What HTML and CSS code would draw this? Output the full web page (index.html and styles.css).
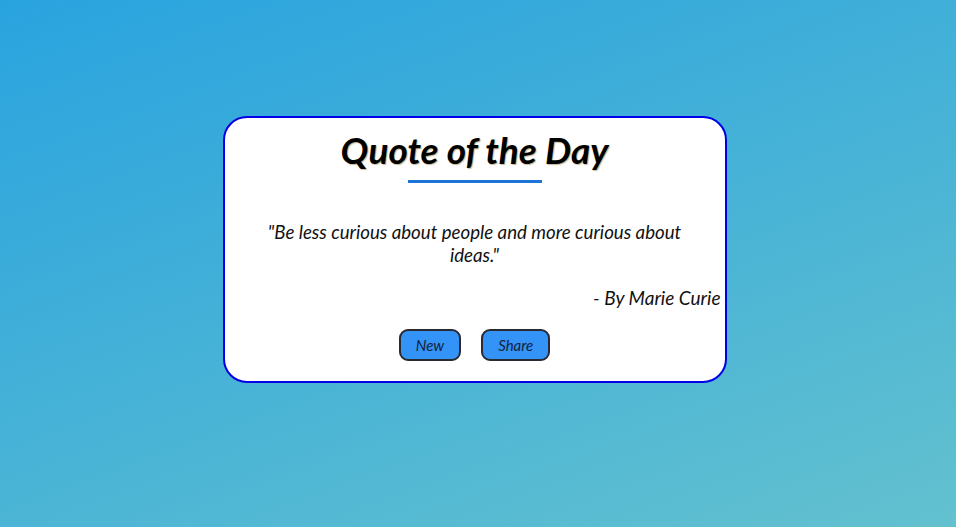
FILE: index.html
```html
<!DOCTYPE html>
<html>
<head>
<meta charset="utf-8">
<link rel="stylesheet" href="styles.css">
</head>
<body>
<main class="page">
  <section class="card">
    <h1 class="title">Quote of the Day</h1>
    <div class="rule"></div>
    <p class="quote">"Be less curious about people and more curious about ideas."</p>
    <p class="author">- By Marie Curie</p>
    <div class="actions">
      <button class="btn">New</button>
      <button class="btn">Share</button>
    </div>
  </section>
</main>
</body>
</html>
```
FILE: styles.css
```css
html, body {
  margin: 0;
  height: 100%;
}
body {
  background: linear-gradient(160deg, #29a3df 0%, #63c1cf 100%);
  font-family: Lato, "Open Sans", sans-serif;
}
.page {
  display: flex;
  justify-content: center;
  padding: 116px 7px 0 0;
}
.card {
  box-sizing: border-box;
  width: 504px;
  height: 267px;
  background: #fff;
  border: 2px solid #0000e6;
  border-radius: 24px;
  display: flex;
  flex-direction: column;
  align-items: center;
}
.title {
  margin: 9px 0 0;
  font-size: 37px;
  font-weight: 700;
  font-style: italic;
  line-height: 46px;
  color: #000;
  text-shadow: 1px 1px 1px #c8b898;
}
.rule {
  width: 134px;
  height: 3px;
  background: #1e73d8;
  margin-top: 7px;
}
.quote {
  margin: 38px 0 0;
  padding: 0 30px;
  font-size: 18.7px;
  font-style: italic;
  line-height: 23px;
  text-align: center;
  color: #111;
}
.author {
  align-self: stretch;
  margin: 19px 0 0;
  padding-right: 4px;
  font-size: 19px;
  font-style: italic;
  line-height: 23px;
  text-align: right;
  color: #111;
}
.actions {
  display: flex;
  gap: 20px;
  margin-top: 20px;
}
.btn {
  height: 32px;
  padding: 0 15px;
  background: #3393f6;
  border: 2px solid #2a2a33;
  border-radius: 9px;
  font-family: Lato, sans-serif;
  font-size: 15px;
  font-style: italic;
  color: #14213d;
}
```
